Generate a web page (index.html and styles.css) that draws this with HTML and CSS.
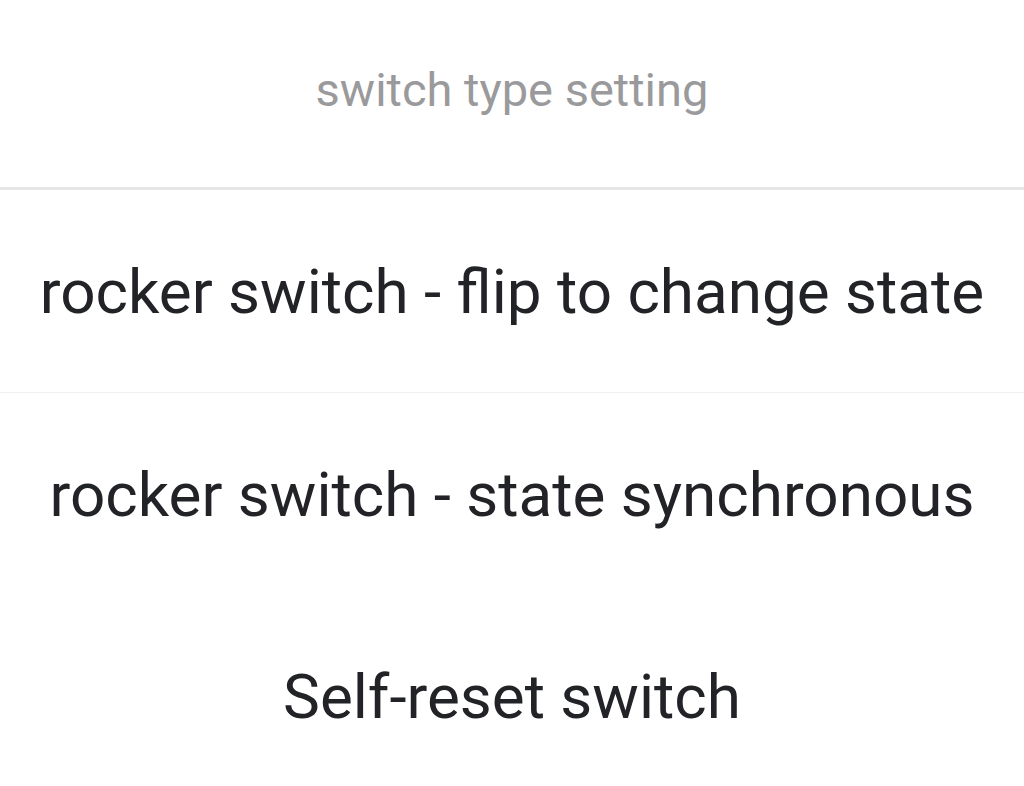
FILE: index.html
```html
<!DOCTYPE html>
<html>
<head>
<meta charset="utf-8">
<link rel="stylesheet" href="styles.css">
</head>
<body>
<div class="sheet">
  <div class="title">switch type setting</div>
  <div class="option first">rocker switch - flip to change state</div>
  <div class="option">rocker switch - state synchronous</div>
  <div class="option last">Self-reset switch</div>
</div>
</body>
</html>
```

FILE: styles.css
```css
html, body {
  margin: 0;
  padding: 0;
  background: #ffffff;
}
.sheet {
  display: flex;
  flex-direction: column;
  font-family: Roboto, "Noto Sans", sans-serif;
}
.title {
  height: 190px;
  box-sizing: border-box;
  padding-bottom: 8px;
  display: flex;
  align-items: center;
  justify-content: center;
  font-size: 47px;
  color: #9a9a9c;
  border-bottom: 3px solid #e6e6e6;
}
.option {
  height: 202px;
  display: flex;
  align-items: center;
  justify-content: center;
  font-size: 62px;
  color: #222327;
}
.option.first {
  border-bottom: 1px solid #f0f0f0;
}
```
